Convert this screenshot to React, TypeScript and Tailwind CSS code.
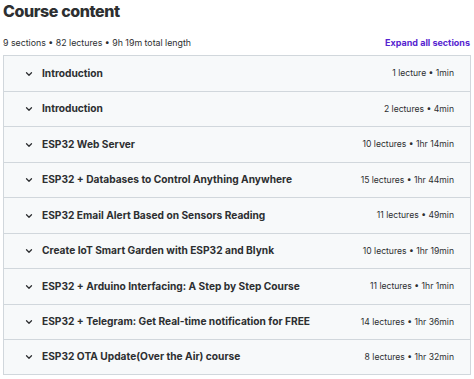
import React from "react";

const sections = [
  { title: "Introduction", meta: "1 lecture • 1min", h: "h-[36px]" },
  { title: "Introduction", meta: "2 lectures • 4min", h: "h-[35px]" },
  { title: "ESP32 Web Server", meta: "10 lectures • 1hr 14min", h: "h-[36px]" },
  { title: "ESP32 + Databases to Control Anything Anywhere", meta: "15 lectures • 1hr 44min", h: "h-[35px]" },
  { title: "ESP32 Email Alert Based on Sensors Reading", meta: "11 lectures • 49min", h: "h-[36px]" },
  { title: "Create IoT Smart Garden with ESP32 and Blynk", meta: "10 lectures • 1hr 19min", h: "h-[35px]" },
  { title: "ESP32 + Arduino Interfacing: A Step by Step Course", meta: "11 lectures • 1hr 1min", h: "h-[36px]" },
  { title: "ESP32 + Telegram: Get Real-time notification for FREE", meta: "14 lectures • 1hr 36min", h: "h-[35px]" },
  { title: "ESP32 OTA Update(Over the Air) course", meta: "8 lectures • 1hr 32min", h: "h-[35px]" },
];

function Chevron() {
  return (
    <svg width="10" height="10" viewBox="0 0 24 24" fill="none" stroke="#2d2f31" strokeWidth="3" strokeLinecap="round" strokeLinejoin="round">
      <path d="M6 9l6 6 6-6" />
    </svg>
  );
}

export default function App() {
  return (
    <div className="w-[474px] h-[379px] bg-white text-[#2d2f31] overflow-hidden" style={{ fontFamily: "Inter, 'Noto Sans', sans-serif" }}>
      <div className="pl-[3px] pt-[1px] h-[30px] text-[16px] font-extrabold leading-[20px] tracking-[-0.4px]">Course content</div>
      <div className="flex items-center justify-between pl-[3px] pr-[4px] h-[25px]">
        <span className="text-[8.8px]">9 sections • 82 lectures • 9h 19m total length</span>
        <span className="text-[9px] font-bold text-[#5624d0]">Expand all sections</span>
      </div>
      <div className="ml-[3px] w-[468px] border-b border-[#d1d7dc]">
        {sections.map((s, i) => (
          <div key={i} className={`${s.h} flex items-center bg-[#f7f9fa] border-t border-x border-[#d1d7dc] pl-[20px] pr-[16px]`}>
            <Chevron />
            <span className="ml-[8px] text-[10.2px] font-bold flex-1">{s.title}</span>
            <span className="text-[8.6px] text-[#2d2f31]">{s.meta}</span>
          </div>
        ))}
      </div>
    </div>
  );
}
